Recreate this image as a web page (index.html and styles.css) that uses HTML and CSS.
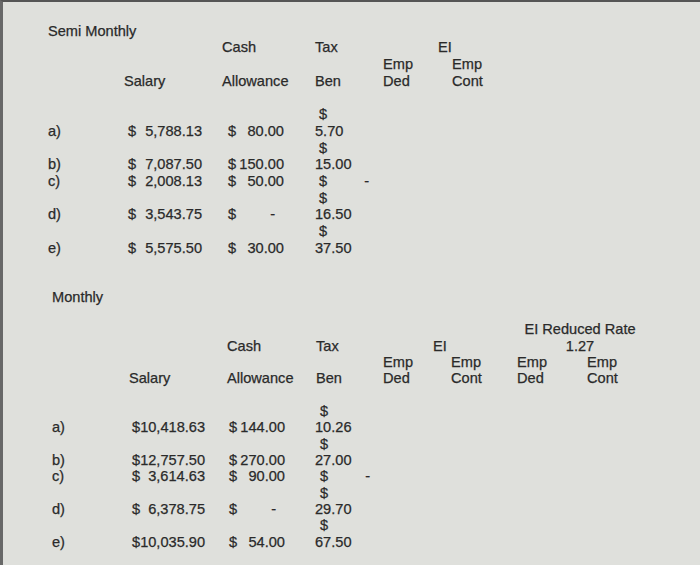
FILE: index.html
```html
<!DOCTYPE html>
<html>
<head>
<meta charset="utf-8">
<link rel="stylesheet" href="styles.css">
</head>
<body>
<main class="page">
  <section class="sheet sheet-semi">
    <div class="cell r0 c1 span4">Semi Monthly</div>
    <div class="cell r1 c3">Cash</div>
    <div class="cell r1 c4">Tax</div>
    <div class="cell r1 c6 ei">EI</div>
    <div class="cell r2 c5 tall"><span>Emp</span><span>Ded</span></div>
    <div class="cell r2 c6 tall"><span>Emp</span><span>Cont</span></div>
    <div class="cell r3 c2">Salary</div>
    <div class="cell r3 c3">Allowance</div>
    <div class="cell r3 c4">Ben</div>

    <div class="cell r6 c1">a)</div>
    <div class="cell r6 c2"><div class="money sal"><span>$</span><span>5,788.13</span></div></div>
    <div class="cell r6 c3"><div class="money cash"><span>$</span><span>80.00</span></div></div>
    <div class="cell r5 c4 tall tax"><span class="cur">$</span><span>5.70</span></div>

    <div class="cell r8 c1">b)</div>
    <div class="cell r8 c2"><div class="money sal"><span>$</span><span>7,087.50</span></div></div>
    <div class="cell r8 c3"><div class="money cash"><span>$</span><span>150.00</span></div></div>
    <div class="cell r7 c4 tall tax"><span class="cur">$</span><span>15.00</span></div>

    <div class="cell r9 c1">c)</div>
    <div class="cell r9 c2"><div class="money sal"><span>$</span><span>2,008.13</span></div></div>
    <div class="cell r9 c3"><div class="money cash"><span>$</span><span>50.00</span></div></div>
    <div class="cell r9 c4"><div class="money taxdash"><span>$</span><span>-</span></div></div>

    <div class="cell r11 c1">d)</div>
    <div class="cell r11 c2"><div class="money sal"><span>$</span><span>3,543.75</span></div></div>
    <div class="cell r11 c3"><div class="money cash dash"><span>$</span><span>-</span></div></div>
    <div class="cell r10 c4 tall tax"><span class="cur">$</span><span>16.50</span></div>

    <div class="cell r13 c1">e)</div>
    <div class="cell r13 c2"><div class="money sal"><span>$</span><span>5,575.50</span></div></div>
    <div class="cell r13 c3"><div class="money cash"><span>$</span><span>30.00</span></div></div>
    <div class="cell r12 c4 tall tax"><span class="cur">$</span><span>37.50</span></div>
  </section>

  <section class="sheet sheet-month">
    <div class="cell r0 c1 span4">Monthly</div>
    <div class="cell r2 c7 span2 tall reduced"><span>EI Reduced Rate</span><span>1.27</span></div>
    <div class="cell r3 c3">Cash</div>
    <div class="cell r3 c4">Tax</div>
    <div class="cell r3 c6 ei">EI</div>
    <div class="cell r4 c5 tall"><span>Emp</span><span>Ded</span></div>
    <div class="cell r4 c6 tall"><span>Emp</span><span>Cont</span></div>
    <div class="cell r4 c7 tall"><span>Emp</span><span>Ded</span></div>
    <div class="cell r4 c8 tall"><span>Emp</span><span>Cont</span></div>
    <div class="cell r5 c2">Salary</div>
    <div class="cell r5 c3">Allowance</div>
    <div class="cell r5 c4">Ben</div>

    <div class="cell r8 c1">a)</div>
    <div class="cell r8 c2"><div class="money sal"><span>$</span><span>10,418.63</span></div></div>
    <div class="cell r8 c3"><div class="money cash"><span>$</span><span>144.00</span></div></div>
    <div class="cell r7 c4 tall tax"><span class="cur">$</span><span>10.26</span></div>

    <div class="cell r10 c1">b)</div>
    <div class="cell r10 c2"><div class="money sal"><span>$</span><span>12,757.50</span></div></div>
    <div class="cell r10 c3"><div class="money cash"><span>$</span><span>270.00</span></div></div>
    <div class="cell r9 c4 tall tax"><span class="cur">$</span><span>27.00</span></div>

    <div class="cell r11 c1">c)</div>
    <div class="cell r11 c2"><div class="money sal"><span>$</span><span>3,614.63</span></div></div>
    <div class="cell r11 c3"><div class="money cash"><span>$</span><span>90.00</span></div></div>
    <div class="cell r11 c4"><div class="money taxdash"><span>$</span><span>-</span></div></div>

    <div class="cell r13 c1">d)</div>
    <div class="cell r13 c2"><div class="money sal"><span>$</span><span>6,378.75</span></div></div>
    <div class="cell r13 c3"><div class="money cash dash"><span>$</span><span>-</span></div></div>
    <div class="cell r12 c4 tall tax"><span class="cur">$</span><span>29.70</span></div>

    <div class="cell r15 c1">e)</div>
    <div class="cell r15 c2"><div class="money sal"><span>$</span><span>10,035.90</span></div></div>
    <div class="cell r15 c3"><div class="money cash"><span>$</span><span>54.00</span></div></div>
    <div class="cell r14 c4 tall tax"><span class="cur">$</span><span>67.50</span></div>
  </section>
</main>
</body>
</html>
```

FILE: styles.css
```css
html, body {
  margin: 0;
  padding: 0;
}

body {
  width: 700px;
  height: 565px;
  box-sizing: border-box;
  background: #dfe0dc;
  border-top: 2px solid #555555;
  border-left: 3px solid #686868;
  overflow: hidden;
  font-family: "Liberation Sans", Arial, sans-serif;
  font-size: 14.6px;
  color: #2a2a2a;
  -webkit-text-stroke: 0.25px #2a2a2a;
}

.page {
  display: flex;
  flex-direction: column;
}

.sheet {
  display: grid;
  align-items: center;
}

.sheet-semi {
  margin-top: 20.8px;
  padding-left: 45px;
  grid-template-columns: 76px 98px 93px 68px 69px 69px;
  grid-auto-rows: 16.7px;
  line-height: 16.7px;
}

.sheet-month {
  margin-top: 32.2px;
  padding-left: 49px;
  grid-template-columns: 77px 98px 89px 67px 68px 66px 70px 70px;
  grid-auto-rows: 16.33px;
  line-height: 16.33px;
}

.cell {
  white-space: nowrap;
}

.r0 { grid-row: 1; }
.r1 { grid-row: 2; }
.r2 { grid-row: 3; }
.r3 { grid-row: 4; }
.r4 { grid-row: 5; }
.r5 { grid-row: 6; }
.r6 { grid-row: 7; }
.r7 { grid-row: 8; }
.r8 { grid-row: 9; }
.r9 { grid-row: 10; }
.r10 { grid-row: 11; }
.r11 { grid-row: 12; }
.r12 { grid-row: 13; }
.r13 { grid-row: 14; }
.r14 { grid-row: 15; }
.r15 { grid-row: 16; }

.c1 { grid-column: 1; }
.c2 { grid-column: 2; }
.c3 { grid-column: 3; }
.c4 { grid-column: 4; }
.c5 { grid-column: 5; }
.c6 { grid-column: 6; }
.c7 { grid-column: 7; }
.c8 { grid-column: 8; }

.span4 { grid-column-end: span 4; }
.span2 { grid-column-end: span 2; }

.tall {
  grid-row-end: span 2;
  display: flex;
  flex-direction: column;
}

.ei { margin-left: -14px; }
.sheet-month .ei { margin-left: -18px; }

.reduced {
  align-items: center;
  padding-right: 16px;
  padding-left: 2px;
}

.tax .cur { padding-left: 4px; }
.sheet-month .tax { margin-left: -1px; }
.sheet-month .tax .cur { padding-left: 5px; }

.money {
  display: flex;
  justify-content: space-between;
}

.sheet-semi .sal { margin-left: 4px; width: 74px; }
.sheet-month .sal { margin-left: 3px; width: 73px; }
.sheet-semi .cash { margin-left: 6px; width: 56px; }
.sheet-month .cash { margin-left: 2px; width: 56px; }
.cash.dash { padding-right: 9px; box-sizing: border-box; }

.taxdash {
  width: 50px;
  padding-left: 4px;
}
```
